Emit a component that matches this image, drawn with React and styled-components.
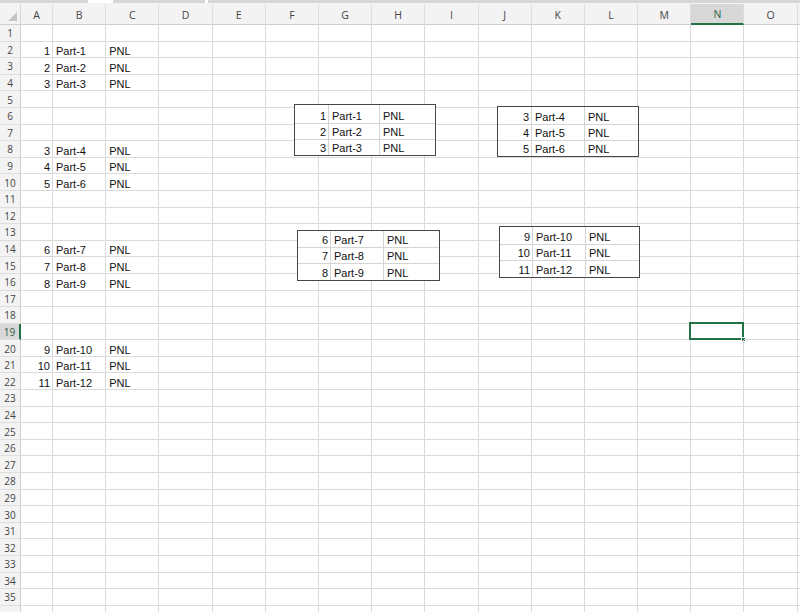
import React from 'react';
import styled, { createGlobalStyle, css } from 'styled-components';

const GREEN = '#217346';
const ROW_H = 16.6;
const COLS = ['A', 'B', 'C', 'D', 'E', 'F', 'G', 'H', 'I', 'J', 'K', 'L', 'M', 'N', 'O'];
const ROW_COUNT = 36;
const SEL_COL = 'N';
const SEL_ROW = 19;

const sheetData = {
  2: ['1', 'Part-1', 'PNL'],
  3: ['2', 'Part-2', 'PNL'],
  4: ['3', 'Part-3', 'PNL'],
  8: ['3', 'Part-4', 'PNL'],
  9: ['4', 'Part-5', 'PNL'],
  10: ['5', 'Part-6', 'PNL'],
  14: ['6', 'Part-7', 'PNL'],
  15: ['7', 'Part-8', 'PNL'],
  16: ['8', 'Part-9', 'PNL'],
  20: ['9', 'Part-10', 'PNL'],
  21: ['10', 'Part-11', 'PNL'],
  22: ['11', 'Part-12', 'PNL'],
};

// linked pictures floating over the sheet
const pictures = [
  { left: 294, top: 104, cols: [34, 51, 55], rows: [19, 16, 16], data: [['1', 'Part-1', 'PNL'], ['2', 'Part-2', 'PNL'], ['3', 'Part-3', 'PNL']] },
  { left: 497, top: 106, cols: [34, 53, 53], rows: [18, 16, 16], data: [['3', 'Part-4', 'PNL'], ['4', 'Part-5', 'PNL'], ['5', 'Part-6', 'PNL']] },
  { left: 297, top: 230, cols: [33, 53, 55], rows: [17, 16, 17], data: [['6', 'Part-7', 'PNL'], ['7', 'Part-8', 'PNL'], ['8', 'Part-9', 'PNL']] },
  { left: 499, top: 226, cols: [33, 53, 53], rows: [18, 16, 17], data: [['9', 'Part-10', 'PNL'], ['10', 'Part-11', 'PNL'], ['11', 'Part-12', 'PNL']] },
];

const GlobalStyle = createGlobalStyle`
  html, body {
    margin: 0;
    padding: 0;
    background: #ffffff;
    overflow: hidden;
  }
  body {
    font-family: "Liberation Sans", Arial, sans-serif;
  }
`;

const Page = styled.div`
  position: relative;
  width: 800px;
  height: 612px;
  overflow: hidden;
  background: #ffffff;
`;

const FormulaStrip = styled.div`
  display: flex;
  height: 4px;
  background: #f3f3f3;
`;

const StripPiece = styled.div`
  height: 3px;
  width: ${(p) => p.$w}px;
  flex: ${(p) => (p.$grow ? '1 1 auto' : '0 0 auto')};
  background: ${(p) => (p.$gap ? '#ffffff' : '#d6d6d6')};
`;

const Sheet = styled.div`
  display: grid;
  grid-template-columns: 21px 32px repeat(14, 53.2px) 1fr;
  grid-template-rows: 21px repeat(${ROW_COUNT}, ${ROW_H}px);
`;

const headerBase = css`
  background: #f3f3f3;
  color: #444444;
  font-family: "Open Sans", "Liberation Sans", sans-serif;
  font-size: 10px;
  display: flex;
  align-items: center;
  justify-content: center;
  box-sizing: border-box;
  overflow: hidden;
`;

const Corner = styled.div`
  ${headerBase};
  position: relative;
  border-right: 1px solid #d6d6d6;
  border-bottom: 1px solid #cfcfcf;
  &:after {
    content: '';
    position: absolute;
    right: 3px;
    bottom: 3px;
    border-style: solid;
    border-width: 0 0 9px 9px;
    border-color: transparent transparent #c4c4c4 transparent;
  }
`;

const ColHeader = styled.div`
  ${headerBase};
  font-size: 10.5px;
  padding-top: 1px;
  border-right: 1px solid #dedede;
  border-bottom: ${(p) => (p.$selected ? `2px solid ${GREEN}` : '1px solid #cfcfcf')};
  background: ${(p) => (p.$selected ? '#d8d8d8' : '#f3f3f3')};
  color: ${(p) => (p.$selected ? '#2f5e44' : '#444444')};
`;

const RowHeader = styled.div`
  ${headerBase};
  padding-top: 1px;
  border-bottom: 1px solid #dedede;
  border-right: ${(p) => (p.$selected ? `2px solid ${GREEN}` : '1px solid #cfcfcf')};
  background: ${(p) => (p.$selected ? '#d8d8d8' : '#f3f3f3')};
  color: ${(p) => (p.$selected ? '#2f5e44' : '#444444')};
`;

const cellText = css`
  box-sizing: border-box;
  display: flex;
  align-items: flex-end;
  justify-content: ${(p) => (p.$right ? 'flex-end' : 'flex-start')};
  padding: 0 2px 0 3px;
  font-size: 11px;
  line-height: 12px;
  color: #111111;
  white-space: nowrap;
`;

const Cell = styled.div`
  ${cellText};
  position: relative;
  border-right: 1px solid #dadada;
  border-bottom: 1px solid #dadada;
  ${(p) =>
    p.$selected &&
    css`
      &:before {
        content: '';
        position: absolute;
        left: -2px;
        top: -2px;
        right: -1px;
        bottom: -1px;
        border: 2px solid ${GREEN};
      }
      &:after {
        content: '';
        position: absolute;
        right: -3px;
        bottom: -3px;
        width: 5px;
        height: 5px;
        background: ${GREEN};
        border: 1px solid #ffffff;
        box-sizing: border-box;
      }
    `}
`;

const Picture = styled.div`
  position: absolute;
  display: flex;
  flex-direction: column;
  background: #ffffff;
  border: 1px solid #474747;
  border-bottom: none;
`;

const PicRow = styled.div`
  display: flex;
  box-sizing: border-box;
  border-bottom: 1px solid #d4d4d4;
  &:last-child {
    border-bottom-color: #474747;
  }
`;

const PicCell = styled.div`
  ${cellText};
  padding-bottom: 1px;
  border-right: 1px solid #d4d4d4;
  &:last-child {
    border-right: none;
  }
`;

const FloatingTable = ({ left, top, cols, rows, data }) => (
  <Picture style={{ left, top }}>
    {data.map((row, r) => (
      <PicRow key={r} style={{ height: rows[r] }}>
        {row.map((val, c) => (
          <PicCell key={c} $right={c === 0} style={{ width: cols[c] }}>
            {val}
          </PicCell>
        ))}
      </PicRow>
    ))}
  </Picture>
);

const App = () => {
  const rows = Array.from({ length: ROW_COUNT }, (_, i) => i + 1);
  return (
    <Page>
      <GlobalStyle />
      <FormulaStrip>
        <StripPiece $w={88} />
        <StripPiece $w={25} $gap />
        <StripPiece $w={92} />
        <StripPiece $w={3} $gap />
        <StripPiece $grow />
      </FormulaStrip>
      <Sheet>
        <Corner />
        {COLS.map((c) => (
          <ColHeader key={c} $selected={c === SEL_COL}>
            {c}
          </ColHeader>
        ))}
        <ColHeader />
        {rows.map((r) => (
          <React.Fragment key={r}>
            <RowHeader $selected={r === SEL_ROW}>{r < ROW_COUNT ? r : ''}</RowHeader>
            {COLS.map((c, ci) => {
              const vals = sheetData[r];
              const val = vals && ci < 3 ? vals[ci] : '';
              return (
                <Cell key={c} $right={ci === 0} $selected={r === SEL_ROW && c === SEL_COL}>
                  {val}
                </Cell>
              );
            })}
            <Cell />
          </React.Fragment>
        ))}
      </Sheet>
      {pictures.map((p, i) => (
        <FloatingTable key={i} {...p} />
      ))}
    </Page>
  );
};

export default App;
